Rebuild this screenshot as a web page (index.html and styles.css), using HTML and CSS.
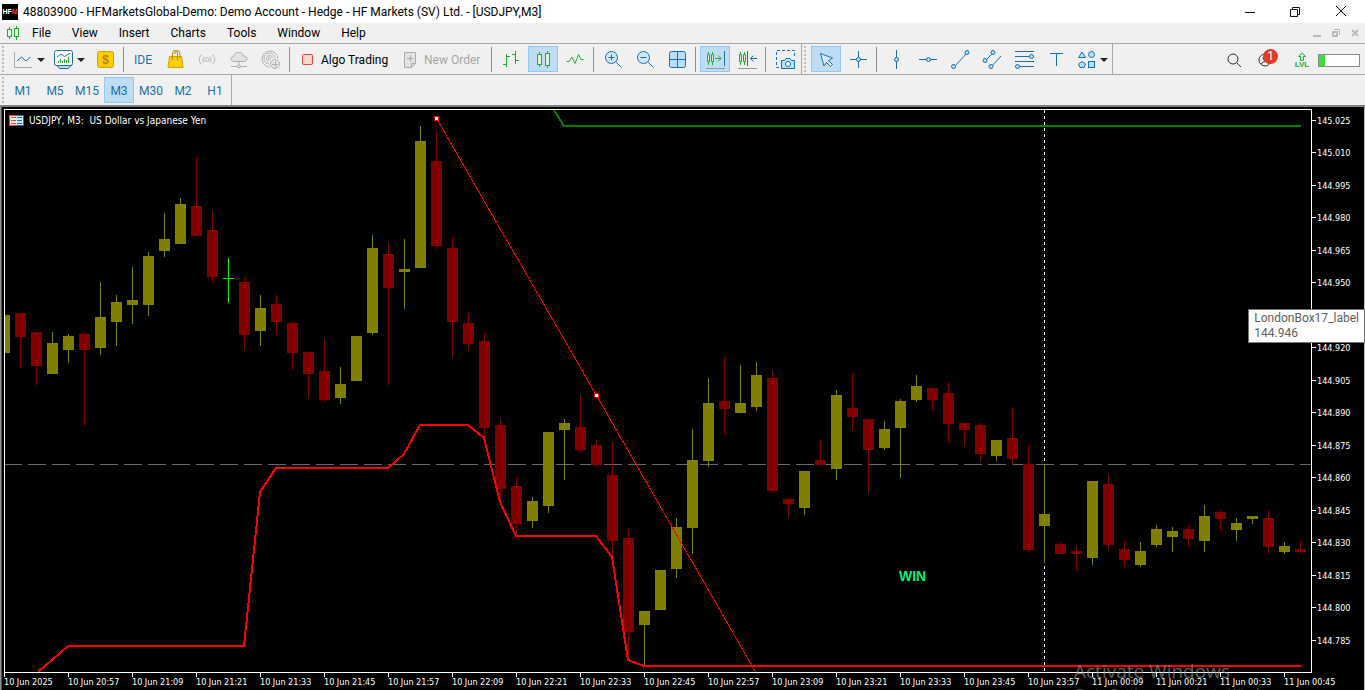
FILE: index.html
```html
<!DOCTYPE html>
<html lang="en">
<head>
  <meta charset="UTF-8">
  <meta name="viewport" content="width=device-width, initial-scale=1.0">
  <title>48803900 - HFMarketsGlobal-Demo</title>
  <link rel="stylesheet" href="styles.css">
</head>
<body>

  <header class="titlebar">
    <span class="logo">HF<b>M</b></span>
    <h1 class="title">48803900 - HFMarketsGlobal-Demo: Demo Account - Hedge - HF Markets (SV) Ltd. - [USDJPY,M3]</h1>
    <div class="window-controls">
      <button type="button" aria-label="Minimize"><svg width="12" height="12"><path d="M1 6.5H11" stroke="#111"/></svg></button>
      <button type="button" aria-label="Restore"><svg width="12" height="12" fill="none" stroke="#111"><path d="M.5 3.500H7.500V10.500H.5Z M2.500 3.500V1.500H9.500V8.500H7.500"/></svg></button>
      <button type="button" aria-label="Close"><svg width="12" height="12"><path d="M0 0L10 10M10 0L0 10" stroke="#111"/></svg></button>
    </div>
  </header>

  <nav class="menubar">
    <svg class="menu-icon" width="14" height="14" fill="#e4fbe4" stroke="#1fae33"><path d="M3.500 1V13M10.500 0V14" /><rect x="1.500" y="3.500" width="4" height="7"/><rect x="8.500" y="2.500" width="4" height="8"/></svg>
    <button type="button">File</button>
    <button type="button">View</button>
    <button type="button">Insert</button>
    <button type="button">Charts</button>
    <button type="button">Tools</button>
    <button type="button">Window</button>
    <button type="button">Help</button>
    <div class="mdi-controls">
      <button type="button" aria-label="Minimize chart"><svg width="10" height="10"><path d="M1 8H9" stroke="#bbb" stroke-width="2"/></svg></button>
      <button type="button" aria-label="Restore chart"><svg width="10" height="10" fill="none" stroke="#bbb"><rect x="2" y="4" width="4" height="4" stroke-width="2"/><path d="M3 1.500H8.500V7"/></svg></button>
      <button type="button" aria-label="Close chart"><svg width="10" height="10"><path d="M2 2L8 8M8 2L2 8" stroke="#bbb" stroke-width="2"/></svg></button>
    </div>
  </nav>

  <div class="toolbar">
    <div class="group">
      <span class="grip"></span>
      <button type="button" class="tool drop" aria-label="Chart type">
        <svg width="20" height="20" fill="none"><path d="M.5 2V17.500H18" stroke="#aaa"/><path d="M3 11L7.500 7L12 11L16.500 7" stroke="#1a6faf"/></svg>
        <i class="arrow"></i>
      </button>
      <button type="button" class="tool drop" aria-label="Indicators">
        <svg width="20" height="20" fill="none"><path d="M2.500 15.500H17.500L14 18.500H6Z" fill="#b9dff8" stroke="#1a6faf"/><rect x=".5" y=".5" width="18" height="15" rx="2" fill="#fff" stroke="#1a6faf"/><path d="M3 7L7 4L10.500 6.500L16 3" stroke="#1a6faf"/><path d="M4.500 13V11M6.500 13V9M8.500 13V11M10.500 13V9M12.500 13V10M14.500 13V7" stroke="#1fae33"/></svg>
        <i class="arrow"></i>
      </button>
      <button type="button" class="tool" aria-label="Depth of market">
        <svg width="20" height="20"><rect x="2.500" y="1.500" width="16" height="16" rx="2" fill="#fc0" stroke="#d6a100"/><text x="10.500" y="14" class="dollar">$</text></svg>
      </button>
      <span class="sep"></span>
      <button type="button" class="tool ide">IDE</button>
      <button type="button" class="tool" aria-label="Market">
        <svg width="20" height="20" fill="none"><path d="M4.500 6.500H16.500L18 17.500H3Z" fill="#fc0" stroke="#d6a100"/><path d="M7.500 10V4Q7.500 .5 10 .5Q12.500 .5 12.500 4V10M9.500 4Q10 .5 13 .5Q15 1 15 5V8" stroke="#b78600"/></svg>
      </button>
      <button type="button" class="tool" aria-label="Signals">
        <svg width="20" height="20" fill="none" stroke="#b5b5b5"><circle cx="10" cy="9.500" r="2"/><path d="M7 6.500Q4.500 9.500 7 12.500M13 6.500Q15.500 9.500 13 12.500M4.500 4.500Q0 9.500 4.500 14.500M15.500 4.500Q20 9.500 15.500 14.500"/></svg>
      </button>
      <button type="button" class="tool" aria-label="VPS">
        <svg width="20" height="20" fill="#e2e2e2" stroke="#b0b0b0"><path d="M5 11.500C1 11.500 1 6.500 4.500 6.500C5 1 14 1 14.500 6C19 5.500 19 11.500 15 11.500Z"/><path d="M10 12V15M2 16.500H8M12 16.500H18"/><circle cx="10" cy="16.500" r="1.500"/></svg>
      </button>
      <button type="button" class="tool" aria-label="Copy signals">
        <svg width="20" height="20" fill="none" stroke="#b0b0b0"><path d="M8.500 17A8 8 0 1 1 17 8.500M8 14A5.500 5.500 0 1 1 14 8M8 11.500A3 3 0 1 1 11.500 8"/><circle cx="8.500" cy="8.500" r="1"/><circle cx="14" cy="14" r="4.500" fill="#e6e6e6"/><path d="M11 14.500H17M14.500 11V17"/></svg>
      </button>
      <span class="sep"></span>
      <button type="button" class="tool algo">
        <svg width="14" height="14"><rect x="2.500" y="1.500" width="10" height="10" rx="1" fill="#ffd5cc" stroke="#e0483e"/></svg>
        Algo Trading
      </button>
      <button type="button" class="tool order" disabled>
        <svg width="16" height="18" fill="#e2e2e2" stroke="#aaa"><path d="M2.500 1.500H13.500V12.500L9.500 16.500H2.500ZM9.500 16.500V12.500H13.500"/><path d="M5 7.500H11M8.500 4.500V10.500"/></svg>
        New Order
      </button>
      <span class="sep"></span>
      <button type="button" class="tool" aria-label="Bar chart">
        <svg width="20" height="20" fill="none" stroke="#1fae33"><path d="M5.500 4V17M2 14.500H5.500M5.500 6.500H9M14.500 1V14M11 4.500H14.500M14.500 10.500H18"/></svg>
      </button>
      <button type="button" class="tool active" aria-label="Candlesticks">
        <svg width="20" height="20" fill="#d7f7d7" stroke="#1fae33"><path d="M6.500 2V17M14.500 1V18"/><rect x="4.500" y="4.500" width="4" height="10"/><rect x="12.500" y="3.500" width="4" height="12"/></svg>
      </button>
      <button type="button" class="tool" aria-label="Line chart">
        <svg width="20" height="20" fill="none" stroke="#1fae33"><path d="M1.500 11.500H4L7 7L10 13.500L13.500 4.500L16 9.500H18.500"/></svg>
      </button>
      <span class="sep"></span>
      <button type="button" class="tool" aria-label="Zoom in">
        <svg width="20" height="20" fill="#cde8fb" stroke="#1a6faf"><circle cx="8.500" cy="7.500" r="6"/><path d="M13 12L18.500 17.500M5.500 7.500H11.500M8.500 4.500V10.500"/></svg>
      </button>
      <button type="button" class="tool" aria-label="Zoom out">
        <svg width="20" height="20" fill="#cde8fb" stroke="#1a6faf"><circle cx="8.500" cy="7.500" r="6"/><path d="M13 12L18.500 17.500M5.500 7.500H11.500"/></svg>
      </button>
      <button type="button" class="tool" aria-label="Tile windows">
        <svg width="20" height="20" fill="#b9e0fa" stroke="#1a6faf"><rect x="2.500" y="1.500" width="16" height="16" rx="2"/><path d="M10.500 2V17M3 9.500H18"/></svg>
      </button>
      <span class="sep"></span>
      <button type="button" class="tool active" aria-label="Auto scroll">
        <svg width="20" height="20" fill="none" stroke="#1fae33"><path d="M3.500 2V15M7.500 2V15M10 8.500H16M13 5.500L16 8.500L13 11.500"/><path d="M2.500 4.500H4.500V11.500H2.500ZM6.500 4.500H8.500V11.500H6.500Z" fill="#d7f7d7"/><path d="M19.500 1V16" stroke="#1a6faf"/><path d="M1 18.500H20" stroke="#999"/></svg>
      </button>
      <button type="button" class="tool" aria-label="Chart shift">
        <svg width="20" height="20" fill="none" stroke="#1fae33"><path d="M3.500 2V15M7.500 2V15"/><path d="M2.500 4.500H4.500V11.500H2.500ZM6.500 4.500H8.500V11.500H6.500Z" fill="#d7f7d7"/><path d="M10.500 1V16M13.500 8.500H20M16.500 5.500L13.500 8.500L16.500 11.500" stroke="#1a6faf"/><path d="M1 18.500H20" stroke="#999"/></svg>
      </button>
      <span class="sep"></span>
      <button type="button" class="tool" aria-label="Screenshot">
        <svg width="20" height="20" fill="none" stroke="#1a6faf"><path d="M4 17.500H1.500V.5H19.500V7" stroke-dasharray="3 2"/><path d="M6.500 10.500H9.500L11 8.500H15L16.500 10.500H19.500V18.500H6.500Z" fill="#b9e0fa"/><circle cx="13" cy="14" r="2.500" fill="#fff"/></svg>
      </button>
    </div>
    <div class="group drawing">
      <span class="grip"></span>
      <button type="button" class="tool active" aria-label="Cursor">
        <svg width="20" height="20" fill="#d9edfc" stroke="#1a6faf"><path d="M4.500 3.500L16.500 8L12.500 10.500L16.500 14.500L14.500 16.500L10.500 12.500L8 16Z"/></svg>
      </button>
      <button type="button" class="tool" aria-label="Crosshair">
        <svg width="20" height="20" fill="#b9e0fa" stroke="#1a6faf"><path d="M10.500 1V18M2 9.500H19"/><circle cx="10.500" cy="9.500" r="2"/></svg>
      </button>
      <span class="sep"></span>
      <button type="button" class="tool" aria-label="Vertical line">
        <svg width="20" height="20" fill="#b9e0fa" stroke="#1a6faf"><path d="M10.500 0V19"/><circle cx="10.500" cy="9.500" r="2"/></svg>
      </button>
      <button type="button" class="tool" aria-label="Horizontal line">
        <svg width="20" height="20" fill="#b9e0fa" stroke="#1a6faf"><path d="M1 9.500H19"/><circle cx="10.500" cy="9.500" r="2"/></svg>
      </button>
      <button type="button" class="tool" aria-label="Trend line">
        <svg width="20" height="20" fill="#b9e0fa" stroke="#1a6faf"><path d="M4 17L17 3"/><circle cx="3.500" cy="16.500" r="2"/><circle cx="17" cy="2.500" r="2"/></svg>
      </button>
      <button type="button" class="tool" aria-label="Channel">
        <svg width="20" height="20" fill="#b9e0fa" stroke="#1a6faf"><path d="M3 11L11 3M9 17L19 6"/><circle cx="3" cy="10.500" r="2"/><circle cx="11" cy="2.500" r="2"/><circle cx="9" cy="16.500" r="2"/></svg>
      </button>
      <button type="button" class="tool" aria-label="Fibonacci">
        <svg width="20" height="20" fill="#b9e0fa" stroke="#1a6faf"><path d="M1 1.500H20M1 6.500H20M1 11.500H20M1 16.500H20"/><circle cx="17.500" cy="6.500" r="2"/><circle cx="3.500" cy="16.500" r="2"/></svg>
      </button>
      <button type="button" class="tool" aria-label="Text">
        <svg width="20" height="20" fill="none" stroke="#1a6faf"><path d="M4 3.500H17M10.500 3.500V16"/></svg>
      </button>
      <button type="button" class="tool drop" aria-label="Shapes">
        <svg width="20" height="20" fill="#b9e0fa" stroke="#1a6faf"><path d="M5 2L8.500 7.500H1.500Z"/><circle cx="14.500" cy="4.500" r="3"/><path d="M5 11.500L8.500 14L7 17.500H3L1.500 14Z"/><rect x="11.500" y="11.500" width="6" height="6"/></svg>
        <i class="arrow"></i>
      </button>
    </div>
    <div class="account">
      <button type="button" class="tool" aria-label="Search">
        <svg width="20" height="20" fill="none" stroke="#333"><circle cx="9" cy="9" r="5"/><path d="M12.500 12.500L17 17"/></svg>
      </button>
      <button type="button" class="tool user" aria-label="Notifications">
        <svg width="20" height="20" fill="none" stroke="#333"><circle cx="9" cy="10" r="6"/><circle cx="9" cy="8" r="2"/><path d="M5 14Q9 9 13 14"/></svg>
        <span class="badge">1</span>
      </button>
      <button type="button" class="tool level">
        <svg width="10" height="9" fill="#d7f7d7" stroke="#1fae33"><path d="M5 .8L8.500 4.500H6.500V8.200H3.500V4.500H1.500Z"/></svg>
        LVL
      </button>
      <div class="meter"><div class="meter-fill"></div></div>
    </div>
  </div>

  <div class="timeframes">
    <span class="grip"></span>
    <button type="button" class="tool">M1</button>
    <button type="button" class="tool">M5</button>
    <button type="button" class="tool">M15</button>
    <button type="button" class="tool active">M3</button>
    <button type="button" class="tool">M30</button>
    <button type="button" class="tool">M2</button>
    <button type="button" class="tool">H1</button>
  </div>

  <main class="chart-window">
    <svg id="chart" viewBox="0 107 1365 583" role="img" aria-label="USDJPY, M3 candlestick chart"></svg>
    <div class="tooltip">LondonBox17_label<br>144.946</div>
    <div class="watermark">
      <p class="watermark-title">Activate Windows</p>
      <p class="watermark-text">Go to Settings to activate Windows.</p>
    </div>
  </main>

  <script src="chart.js"></script>
</body>
</html>
```
FILE: styles.css
```css
/* Page */
body {
  margin: 0;
  height: 100vh;
  display: flex;
  flex-direction: column;
  overflow: hidden;
  background: #f0f0f0;
  color: #000;
  font-family: Roboto, "Open Sans", sans-serif;
  font-size: 12px;
  line-height: 16px;
}

button {
  padding: 0;
  border: 0;
  background: none;
  color: inherit;
  font: inherit;
  white-space: nowrap;
}

svg {
  flex: none;
}

/* Title bar */
.titlebar {
  display: flex;
  align-items: center;
  height: 23px;
  padding-left: 2px;
  background: #fff;
}

.logo {
  width: 16px;
  height: 16px;
  background: #000;
  color: #fff;
  font: bold 7px/16px "Liberation Sans", sans-serif;
  text-align: center;
}

.logo b {
  color: #f33;
}

.title {
  margin: 0 0 0 5px;
  font-size: 12px;
  font-weight: normal;
}

.window-controls {
  display: flex;
  margin-left: auto;
}

.window-controls button {
  display: flex;
  align-items: center;
  justify-content: center;
  width: 46px;
  height: 22px;
}

/* Menu */
.menubar {
  display: flex;
  align-items: center;
  gap: 21px;
  height: 20px;
  padding-left: 6px;
  border-bottom: 1px solid #a8a8a8;
}

.menu-icon {
  margin-right: -9px;
}

.mdi-controls {
  display: flex;
  gap: 9px;
  margin: 0 5px 0 auto;
}

.mdi-controls button {
  display: flex;
}

/* Toolbars */
.toolbar {
  display: flex;
  height: 30px;
  border-bottom: 1px solid #a8a8a8;
  background: #f0f0f0;
}

.group {
  display: flex;
  align-items: center;
  gap: 2px;
  padding-right: 1px;
  border-right: 1px solid #a8a8a8;
}

.grip {
  width: 2px;
  height: 26px;
  margin: 0 4px 0 2px;
  background: repeating-linear-gradient(to bottom, #bbb 0 2px, transparent 2px 4px);
}

.drawing .grip {
  margin-right: 3px;
}

.tool {
  box-sizing: border-box;
  display: flex;
  align-items: center;
  justify-content: center;
  width: 30px;
  height: 26px;
  padding-top: 2px;
  border: 1px solid transparent;
}

.active {
  background: #c0dcf3;
  border-color: #90c8f6;
}

.drop {
  width: 38px;
  gap: 3px;
}

.arrow {
  border: 4px solid transparent;
  border-top-color: #222;
  border-bottom: 0;
}

.sep {
  width: 1px;
  height: 25px;
  margin: 0 2px 0 1px;
  background: #8f8f8f;
}

.ide,
.timeframes {
  color: #1a6faf;
}

.dollar {
  fill: #b78600;
  font: bold 12px "Liberation Sans", sans-serif;
  text-anchor: middle;
}

.algo {
  width: 102px;
  justify-content: flex-start;
  gap: 7px;
  padding-left: 5px;
}

.order {
  width: 90px;
  justify-content: flex-start;
  gap: 6px;
  padding-left: 3px;
  color: #a5a5a5;
}

.account {
  display: flex;
  align-items: center;
  gap: 2px;
  margin-left: auto;
  padding-right: 5px;
}

.user {
  position: relative;
}

.badge {
  position: absolute;
  top: 2px;
  right: 2px;
  width: 15px;
  height: 15px;
  border-radius: 50%;
  background: #e23c22;
  color: #fff;
  line-height: 15px;
}

.level {
  flex-direction: column;
  width: 28px;
  margin-left: 5px;
  color: #1fae33;
  font: bold 8px/8px "Liberation Sans", sans-serif;
}

.meter {
  box-sizing: border-box;
  width: 42px;
  height: 13px;
  margin-top: 2px;
  border: 1px solid #8a8a8a;
  background: #fff;
}

.meter-fill {
  width: 15%;
  height: 100%;
  background: #3fdc3f;
}

.timeframes {
  display: flex;
  align-items: center;
  align-self: flex-start;
  gap: 2px;
  height: 30px;
  padding-right: 1px;
  border-right: 1px solid #a8a8a8;
}

.timeframes .grip {
  margin-right: 2px;
}

/* Chart */
.chart-window {
  position: relative;
  flex: 1;
  min-height: 0;
  overflow: hidden;
  border-top: 2px solid #808080;
  background: #000;
}

#chart {
  display: block;
  width: 100%;
}

#chart text {
  fill: #fff;
  font-family: "DejaVu Sans Condensed", "Noto Sans", sans-serif;
  font-size: 9px;
  white-space: pre;
}

#chart .caption {
  font-size: 10px;
}

#chart .result {
  fill: #00f080;
  font: bold 14px "Liberation Sans", sans-serif;
}

.tooltip {
  position: absolute;
  top: 202px;
  right: 0;
  padding: 1px 5px;
  border: 1px solid #767676;
  background: #fff;
  color: #606060;
  line-height: 15px;
}

.watermark {
  position: absolute;
  top: 552px;
  left: 1074px;
  color: rgba(160, 160, 160, 0.6);
  font-family: "Open Sans", sans-serif;
  white-space: nowrap;
}

.watermark p {
  margin: 0;
}

.watermark-title {
  font-size: 19px;
  line-height: 24px;
}

.watermark-text {
  font-size: 13px;
  line-height: 20px;
}
```
FILE: chart.js
```js
const chart = document.getElementById('chart');
const STEP = 16;
const LEFT = 4;
const RIGHT = 1311;
const TOP = 109;
const BOTTOM = 672;

// [high, body top, body bottom, low, direction]
const candles = [
  [315, 315, 353, 353, 'u'], [313, 313, 337, 368, 'd'], [332, 332, 366, 385, 'd'], [332, 343, 374, 374, 'u'],
  [334, 336, 350, 363, 'u'], [332, 334, 350, 426, 'd'], [282, 317, 348, 355, 'u'], [295, 302, 322, 346, 'u'],
  [267, 300, 305, 324, 'u'], [252, 256, 305, 316, 'u'], [213, 239, 251, 257, 'u'], [198, 204, 244, 244, 'u'],
  [157, 206, 236, 236, 'd'], [211, 230, 277, 283, 'd'], [258, 278, 279, 303, 'n'], [276, 282, 335, 350, 'd'],
  [295, 308, 331, 346, 'u'], [295, 304, 322, 335, 'd'], [321, 323, 353, 370, 'd'], [352, 352, 374, 398, 'd'],
  [339, 371, 400, 402, 'd'], [367, 384, 398, 404, 'u'], [336, 336, 381, 381, 'u'], [235, 248, 333, 335, 'u'],
  [243, 254, 288, 385, 'd'], [239, 269, 272, 309, 'u'], [126, 141, 268, 268, 'u'], [131, 161, 246, 249, 'd'],
  [237, 248, 322, 357, 'd'], [313, 323, 344, 350, 'd'], [332, 341, 428, 437, 'd'], [419, 425, 489, 503, 'd'],
  [477, 486, 524, 535, 'd'], [497, 501, 521, 528, 'u'], [432, 432, 506, 513, 'u'], [419, 423, 430, 480, 'u'],
  [395, 427, 450, 452, 'd'], [440, 445, 465, 467, 'd'], [442, 475, 541, 557, 'd'], [529, 538, 632, 659, 'd'],
  [611, 611, 625, 665, 'u'], [570, 570, 610, 610, 'u'], [518, 527, 569, 578, 'u'], [429, 460, 528, 554, 'u'],
  [378, 403, 461, 467, 'u'], [356, 401, 409, 435, 'd'], [365, 403, 413, 413, 'u'], [362, 375, 407, 411, 'u'],
  [371, 378, 491, 493, 'd'], [497, 499, 504, 517, 'd'], [471, 471, 508, 515, 'u'], [440, 460, 465, 465, 'd'],
  [390, 395, 469, 480, 'u'], [373, 408, 417, 430, 'd'], [419, 419, 450, 493, 'd'], [421, 429, 448, 450, 'u'],
  [399, 401, 428, 478, 'u'], [375, 386, 400, 402, 'u'], [388, 388, 400, 411, 'd'], [382, 393, 424, 443, 'd'],
  [423, 423, 430, 446, 'd'], [423, 425, 454, 461, 'd'], [440, 440, 456, 461, 'u'], [408, 438, 459, 465, 'd'],
  [445, 464, 550, 552, 'd'], [464, 514, 526, 563, 'u'], [542, 544, 554, 554, 'd'], [546, 551, 554, 571, 'd'],
  [481, 481, 558, 565, 'u'], [475, 484, 545, 550, 'd'], [540, 549, 560, 567, 'd'], [542, 551, 565, 567, 'u'],
  [525, 529, 545, 547, 'u'], [527, 531, 537, 552, 'u'], [525, 529, 539, 547, 'd'], [505, 516, 541, 552, 'u'],
  [510, 512, 519, 532, 'd'], [518, 523, 530, 541, 'u'], [516, 516, 519, 524, 'u'], [510, 518, 547, 554, 'd'],
  [542, 546, 552, 554, 'u'], [540, 549, 552, 554, 'd']
];
const colors = { u: '#808000', d: '#800000', n: '#00ff00' };

const prices = ['145.025', '145.010', '144.995', '144.980', '144.965', '144.950', '', '144.920', '144.905',
  '144.890', '144.875', '144.860', '144.845', '144.830', '144.815', '144.800', '144.785'];

const times = ['10 Jun 2025', '10 Jun 20:57', '10 Jun 21:09', '10 Jun 21:21', '10 Jun 21:33', '10 Jun 21:45',
  '10 Jun 21:57', '10 Jun 22:09', '10 Jun 22:21', '10 Jun 22:33', '10 Jun 22:45', '10 Jun 22:57', '10 Jun 23:09',
  '10 Jun 23:21', '10 Jun 23:33', '10 Jun 23:45', '10 Jun 23:57', '11 Jun 00:09', '11 Jun 00:21', '11 Jun 00:33',
  '11 Jun 00:45'];

function add(name, attrs, text) {
  const el = document.createElementNS('http://www.w3.org/2000/svg', name);
  for (const key in attrs) el.setAttribute(key, attrs[key]);
  if (text) el.textContent = text;
  chart.appendChild(el);
}

function rect(x, y, width, height, fill) {
  add('rect', { x, y, width, height, fill, 'shape-rendering': 'crispEdges' });
}

function line(points, stroke, width, extra) {
  add('polyline', { points, stroke, 'stroke-width': width, fill: 'none', 'shape-rendering': 'crispEdges', ...extra });
}

// Current price and day separator
line('4,464.5 1311,464.5', '#696969', 1, { 'stroke-dasharray': '18 6' });
line('1044.5,110 1044.5,672', '#ffffff', 1, { 'stroke-dasharray': '3 3' });

// Candles
candles.forEach(([high, top, bottom, low, dir], i) => {
  const x = LEFT + i * STEP;
  rect(x, high, 1, low - high, colors[dir]);
  const left = Math.max(x - 5, LEFT);
  rect(left, top, x + 6 - left, bottom - top, colors[dir]);
});

// Session high and low
line('554,110 564,126 1301,126', '#008000', 2);
line('38,672 68,646 244,646 260,492 276,468 388,468 404,454 420,425 468,425 484,438 500,502 516,536 596,536 612,557 628,660 644,666 1301,666', '#ff0000', 2);

// Trend line with its anchors
line('436.5,118.5 596.5,395.5 755.5,672', '#ff0000', 1);
[[436, 118], [596, 395]].forEach(([x, y]) => {
  rect(x - 2, y - 2, 5, 5, '#ff0000');
  rect(x - 1, y - 1, 3, 3, '#ffffff');
});

// Window edges and plot frame
rect(0, 107, 1, 583, '#909090');
rect(1, 107, 1, 583, '#505050');
rect(1364, 107, 1, 583, '#c0c0c0');
rect(LEFT, TOP, RIGHT - LEFT + 1, 1, '#ffffff');
rect(LEFT, BOTTOM, RIGHT - LEFT + 1, 1, '#ffffff');
rect(LEFT, TOP, 1, BOTTOM - TOP, '#ffffff');
rect(RIGHT, TOP, 1, BOTTOM - TOP, '#ffffff');

// Price scale, the empty label sits under the tooltip
prices.forEach((price, i) => {
  const y = Math.floor(120 + i * 32.5);
  rect(RIGHT, y, 5, 1, '#ffffff');
  if (price) add('text', { x: 1317, y: y + 4 }, price);
});

// Time scale
times.forEach((time, i) => {
  const x = LEFT + i * 64;
  rect(x, BOTTOM, 1, 5, '#ffffff');
  add('text', { x, y: 685 }, time);
});

// Symbol caption
rect(9, 115, 8, 11, '#e0483e');
rect(17, 115, 7, 11, '#1a6faf');
rect(10, 116, 6, 9, '#ffe3de');
rect(16, 116, 7, 9, '#cde8fb');
[117, 120, 123].forEach(y => {
  rect(11, y, 5, 1, '#e0483e');
  rect(17, y, 5, 1, '#1a6faf');
});
add('text', { x: 29, y: 124, class: 'caption' }, 'USDJPY, M3:  US Dollar vs Japanese Yen');
add('text', { x: 899, y: 581, class: 'result' }, 'WIN');
```
